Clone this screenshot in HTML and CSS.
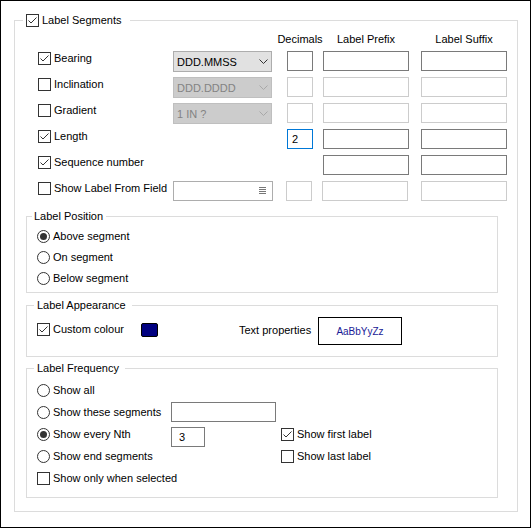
FILE: index.html
```html
<!DOCTYPE html>
<html lang="en">
<head>
    <meta charset="UTF-8">
    <title>Label Segments</title>
    <link rel="stylesheet" href="styles.css">
</head>
<body>
<div class="window">

    <!-- Label Segments -->
    <fieldset class="group outer">
        <legend><span class="check on"><svg viewBox="0 0 11 11"><polyline points="1.5,5.5 4,8 9.5,2.5"/></svg></span>Label Segments</legend>

        <div class="seg-grid">
            <span></span>
            <span></span>
            <span class="head">Decimals</span>
            <span class="head wide">Label Prefix</span>
            <span class="head wide">Label Suffix</span>

            <label class="opt"><span class="check on"><svg viewBox="0 0 11 11"><polyline points="1.5,5.5 4,8 9.5,2.5"/></svg></span>Bearing</label>
            <div class="combo"><span>DDD.MMSS</span><svg class="chev" viewBox="0 0 9 5"><polyline points="0.5,0.5 4.5,4.5 8.5,0.5"/></svg></div>
            <input class="box dec" type="text">
            <input class="box wide" type="text">
            <input class="box wide" type="text">

            <label class="opt"><span class="check"></span>Inclination</label>
            <div class="combo off"><span>DDD.DDDD</span><svg class="chev" viewBox="0 0 9 5"><polyline points="0.5,0.5 4.5,4.5 8.5,0.5"/></svg></div>
            <input class="box dec off" type="text" disabled>
            <input class="box wide off" type="text" disabled>
            <input class="box wide off" type="text" disabled>

            <label class="opt"><span class="check"></span>Gradient</label>
            <div class="combo off"><span>1 IN ?</span><svg class="chev" viewBox="0 0 9 5"><polyline points="0.5,0.5 4.5,4.5 8.5,0.5"/></svg></div>
            <input class="box dec off" type="text" disabled>
            <input class="box wide off" type="text" disabled>
            <input class="box wide off" type="text" disabled>

            <label class="opt"><span class="check on"><svg viewBox="0 0 11 11"><polyline points="1.5,5.5 4,8 9.5,2.5"/></svg></span>Length</label>
            <span></span>
            <input class="box dec focus" type="text" value="2">
            <input class="box wide" type="text">
            <input class="box wide" type="text">

            <label class="opt"><span class="check on"><svg viewBox="0 0 11 11"><polyline points="1.5,5.5 4,8 9.5,2.5"/></svg></span>Sequence number</label>
            <span></span>
            <span></span>
            <input class="box wide" type="text">
            <input class="box wide" type="text">

            <label class="opt"><span class="check"></span>Show Label From Field</label>
            <div class="field-pick"><svg class="list" viewBox="0 0 7 8"><path d="M0 0.5h7M0 2.5h7M0 4.5h7M0 6.5h7"/></svg></div>
            <input class="box dec off shift" type="text" disabled>
            <input class="box wide off shift" type="text" disabled>
            <input class="box wide off" type="text" disabled>
        </div>

        <!-- Label Position -->
        <fieldset class="group inner position">
            <legend>Label Position</legend>
            <div class="opt-list">
                <label class="opt"><span class="radio on"></span>Above segment</label>
                <label class="opt"><span class="radio"></span>On segment</label>
                <label class="opt"><span class="radio"></span>Below segment</label>
            </div>
        </fieldset>

        <!-- Label Appearance -->
        <fieldset class="group inner appearance">
            <legend>Label Appearance</legend>
            <div class="appear-row">
                <label class="opt colour-opt"><span class="check on"><svg viewBox="0 0 11 11"><polyline points="1.5,5.5 4,8 9.5,2.5"/></svg></span>Custom colour</label>
                <span class="swatch"></span>
                <span class="text-label">Text properties</span>
                <span class="font-box">AaBbYyZz</span>
            </div>
        </fieldset>

        <!-- Label Frequency -->
        <fieldset class="group inner frequency">
            <legend>Label Frequency</legend>
            <div class="freq-grid">
                <label class="opt"><span class="radio"></span>Show all</label>
                <span></span>
                <span></span>

                <label class="opt"><span class="radio"></span>Show these segments</label>
                <input class="box seg-box" type="text">
                <span></span>

                <label class="opt"><span class="radio on"></span>Show every Nth</label>
                <input class="box nth-box" type="text" value="3">
                <label class="opt"><span class="check on"><svg viewBox="0 0 11 11"><polyline points="1.5,5.5 4,8 9.5,2.5"/></svg></span>Show first label</label>

                <label class="opt"><span class="radio"></span>Show end segments</label>
                <span></span>
                <label class="opt"><span class="check"></span>Show last label</label>

                <label class="opt"><span class="check"></span>Show only when selected</label>
                <span></span>
                <span></span>
            </div>
        </fieldset>
    </fieldset>

</div>
</body>
</html>
```

FILE: styles.css
```css
body {
    margin: 0;
    font-family: "Liberation Sans", Arial, sans-serif;
    font-size: 11px;
    color: #000;
    background-color: #fff;
}
.window {
    width: 531px;
    height: 528px;
    box-sizing: border-box;
    border: 1px solid #000;
    padding: 12px 12px 0 13px;
    background-color: #fff;
}
.group {
    margin: 0;
    min-width: 0;
    border: 1px solid #dcdcdc;
}
.group legend {
    line-height: 14px;
    display: flex;
    align-items: center;
}
.outer {
    padding: 0 9px 13px 11px;
}
.outer > legend {
    margin-left: -3px;
    padding: 0 8px 0 3px;
    gap: 3px;
}
.inner {
    margin-right: 10px;
}
.check {
    width: 13px;
    height: 13px;
    box-sizing: border-box;
    border: 1px solid #333;
    background-color: #fff;
    display: inline-flex;
    flex: none;
}
.check svg {
    width: 11px;
    height: 11px;
    fill: none;
    stroke: #333;
    stroke-width: 1;
}
.radio {
    width: 13px;
    height: 13px;
    box-sizing: border-box;
    border: 1px solid #333;
    border-radius: 50%;
    background-color: #fff;
    display: inline-flex;
    align-items: center;
    justify-content: center;
    flex: none;
}
.radio.on::after {
    content: "";
    width: 7px;
    height: 7px;
    border-radius: 50%;
    background-color: #333;
}
.opt {
    display: flex;
    align-items: center;
    gap: 3px;
    height: 13px;
    line-height: 13px;
    white-space: nowrap;
}

/* segment table */
.seg-grid {
    display: grid;
    grid-template-columns: 135px 114px 36px 98px 86px;
    grid-template-rows: 14px repeat(6, 21px);
    row-gap: 5px;
    margin: 5px 0 0 12px;
    align-items: start;
    justify-items: start;
}
.seg-grid .opt {
    margin-top: 1px;
}
.head {
    width: 26px;
    display: flex;
    justify-content: center;
    white-space: nowrap;
    line-height: 14px;
}
.head.wide {
    width: 86px;
}
.box {
    height: 20px;
    box-sizing: border-box;
    border: 1px solid #7a7a7a;
    background-color: #fff;
    margin: 0;
    padding: 0 4px;
    font: inherit;
    color: #000;
    outline: none;
}
.box.dec {
    width: 26px;
}
.box.wide {
    width: 86px;
}
.box.off {
    border-color: #cccccc;
}
.box.focus {
    border-color: #0078d7;
}
.box.shift {
    margin-left: -1px;
}
.combo {
    width: 99px;
    height: 21px;
    box-sizing: border-box;
    border: 1px solid #adadad;
    background-color: #e1e1e1;
    display: flex;
    align-items: center;
    justify-content: space-between;
    padding: 0 3px 0 3px;
}
.combo .chev {
    width: 9px;
    height: 5px;
    fill: none;
    stroke: #333;
    stroke-width: 1;
}
.combo.off {
    background-color: #cccccc;
    border-color: #bfbfbf;
    color: #838383;
}
.combo.off .chev {
    stroke: #a8a8a8;
}
.field-pick {
    width: 100px;
    height: 20px;
    box-sizing: border-box;
    border: 1px solid #adadad;
    background-color: #fff;
    display: flex;
    align-items: center;
    justify-content: flex-end;
    padding-right: 6px;
}
.field-pick .list {
    width: 7px;
    height: 8px;
    fill: none;
    stroke: #777;
    stroke-width: 1;
}

/* Label Position */
.position {
    margin-top: 7px;
    padding: 3px 0 3px 10px;
}
.position legend {
    margin-left: -5px;
    padding: 0 3px 0 2px;
}
.opt-list .opt {
    height: 21px;
}

/* Label Appearance */
.appearance {
    margin-top: 5px;
    padding: 5px 0 11px 10px;
}
.appearance legend {
    margin-left: -3px;
    padding: 0 6px 0 3px;
}
.appear-row {
    display: flex;
    align-items: flex-start;
}
.colour-opt {
    width: 104px;
    margin-top: 6px;
}
.swatch {
    width: 17px;
    height: 14px;
    box-sizing: border-box;
    margin-top: 6px;
    border: 1px solid #000;
    border-radius: 2px;
    background-color: #000080;
}
.text-label {
    width: 79px;
    margin: 6px 0 0 81px;
    line-height: 14px;
    white-space: nowrap;
}
.font-box {
    width: 84px;
    height: 28px;
    box-sizing: border-box;
    border: 1px solid #000;
    display: flex;
    align-items: center;
    justify-content: center;
    font-size: 10px;
    color: #1a1a96;
}

/* Label Frequency */
.frequency {
    margin-top: 4px;
    padding: 4px 0 8px 10px;
}
.frequency legend {
    margin-left: -3px;
    padding: 0 6px 0 3px;
}
.freq-grid {
    display: grid;
    grid-template-columns: 134px 111px auto;
    grid-auto-rows: 22px;
    align-items: center;
    justify-items: start;
}
.seg-box {
    width: 105px;
}
.nth-box {
    width: 34px;
    align-self: start;
    margin-top: 4px;
    padding-left: 7px;
}
.freq-grid > .opt:nth-child(9),
.freq-grid > .opt:nth-child(12) {
    margin-left: -1px;
}
```
